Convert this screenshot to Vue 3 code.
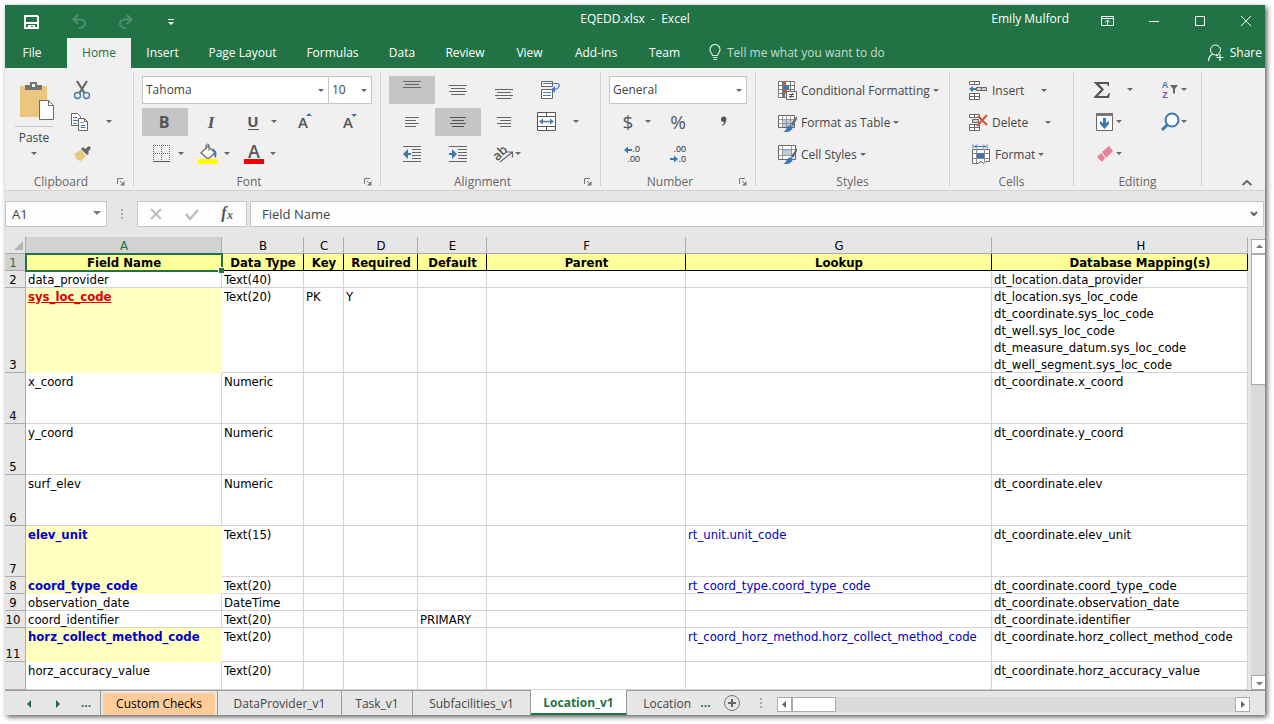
<script setup>
import { ref } from 'vue'

const ribbonTabs = ['File', 'Home', 'Insert', 'Page Layout', 'Formulas', 'Data', 'Review', 'View', 'Add-ins', 'Team']
const activeTab = ref('Home')

const fontName = ref('Tahoma')
const fontSize = ref('10')
const numberFormat = ref('General')
const cellRef = ref('A1')
const formula = ref('Field Name')

const columns = ['A', 'B', 'C', 'D', 'E', 'F', 'G', 'H']
const headings = ['Field Name', 'Data Type', 'Key', 'Required', 'Default', 'Parent', 'Lookup', 'Database Mapping(s)']

const rows = [
  { n: '2', size: 'one', name: 'data_provider', type: 'Text(40)', map: ['dt_location.data_provider'] },
  {
    n: '3', size: 'five', name: 'sys_loc_code', kind: 'key', type: 'Text(20)', key: 'PK', req: 'Y',
    map: ['dt_location.sys_loc_code', 'dt_coordinate.sys_loc_code', 'dt_well.sys_loc_code', 'dt_measure_datum.sys_loc_code', 'dt_well_segment.sys_loc_code'],
  },
  { n: '4', size: 'three', name: 'x_coord', type: 'Numeric', map: ['dt_coordinate.x_coord'] },
  { n: '5', size: 'three', name: 'y_coord', type: 'Numeric', map: ['dt_coordinate.y_coord'] },
  { n: '6', size: 'three', name: 'surf_elev', type: 'Numeric', map: ['dt_coordinate.elev'] },
  { n: '7', size: 'three', name: 'elev_unit', kind: 'lookup', type: 'Text(15)', lookup: 'rt_unit.unit_code', map: ['dt_coordinate.elev_unit'] },
  { n: '8', size: 'one', name: 'coord_type_code', kind: 'lookup', type: 'Text(20)', lookup: 'rt_coord_type.coord_type_code', map: ['dt_coordinate.coord_type_code'] },
  { n: '9', size: 'one', name: 'observation_date', type: 'DateTime', map: ['dt_coordinate.observation_date'] },
  { n: '10', size: 'one', name: 'coord_identifier', type: 'Text(20)', def: 'PRIMARY', map: ['dt_coordinate.identifier'] },
  { n: '11', size: 'two', name: 'horz_collect_method_code', kind: 'lookup', type: 'Text(20)', lookup: 'rt_coord_horz_method.horz_collect_method_code', map: ['dt_coordinate.horz_collect_method_code'] },
  { n: '', size: 'last', name: 'horz_accuracy_value', type: 'Text(20)', map: ['dt_coordinate.horz_accuracy_value'] },
]

const sheets = ['Custom Checks', 'DataProvider_v1', 'Task_v1', 'Subfacilities_v1', 'Location_v1', 'Location']
const sheetClass = ['custom', 'provider', 'task', 'sub', 'active', 'next']
</script>

<template>
  <div class="window">
    <header class="titlebar">
      <div class="quick">
        <button aria-label="Save">
          <svg width="46" height="30"><path d="M16 9h11l1 1v11H15V9z" fill="none" stroke="#fff" stroke-width="2" /><path d="M15 15h13v2H15zM18 21v-3h7v3h-2v-2h-2v2z" fill="#fff" /></svg>
        </button>
        <button aria-label="Undo">
          <svg width="46" height="30"><path d="M18 12.500h6c7 0 7 8-1 8.500M22 8l-4.500 4.500L22 17" fill="none" stroke="#4d9170" stroke-width="2" /></svg>
        </button>
        <button aria-label="Redo">
          <svg width="46" height="30"><path d="M29 12.500h-6c-7 0-7 8 1 8.500M25 8l4.500 4.500L25 17" fill="none" stroke="#4d9170" stroke-width="2" /></svg>
        </button>
        <button aria-label="Customize Quick Access Toolbar">
          <svg width="46" height="30"><path d="M20 12h6v1h-6zM20 15h6l-3 3z" fill="#fff" /></svg>
        </button>
      </div>
      <div class="doc">EQEDD.xlsx&nbsp; -&nbsp; Excel</div>
      <div class="sys">
        <span class="user">Emily Mulford</span>
        <button aria-label="Ribbon Display Options">
          <svg width="46" height="28"><path d="M16.500 8.500h12v9h-12zM16.500 10.500h12M22.500 17v-5M20 14.500l2.500-2.500 2.500 2.500" fill="none" stroke="#fff" /></svg>
        </button>
        <button aria-label="Minimize">
          <svg width="46" height="28"><path d="M18 13.500h10" stroke="#fff" /></svg>
        </button>
        <button aria-label="Maximize">
          <svg width="46" height="28"><path d="M18.500 8.500h9v9h-9z" fill="none" stroke="#fff" /></svg>
        </button>
        <button aria-label="Close">
          <svg width="42" height="28"><path d="M18 8l10 10M28 8l-10 10" stroke="#fff" /></svg>
        </button>
      </div>
    </header>

    <nav class="tabs">
      <div class="tablist">
        <button v-for="t in ribbonTabs" :key="t" :class="{ on: t === activeTab, file: t === 'File' }" @click="activeTab = t">{{ t }}</button>
      </div>
      <button class="tell">
        <svg width="12" height="18"><path d="M3.500 11.500C3 9 1 8.500 1 5.500a5 5 0 0 1 10 0c0 3-2 3.500-2.500 6zM4 13.500h4.500M4.500 15.500h3.500" fill="none" stroke="#d6e9de" stroke-width="1.200" /></svg>
        <span>Tell me what you want to do</span>
      </button>
      <button class="share">
        <svg width="18" height="18"><circle cx="8.500" cy="6" r="5" fill="none" stroke="#fff" /><path d="M1.500 17c0-4 2-6 4.500-7M9 11l2 1M9.500 13.500h7M13 10v7" fill="none" stroke="#fff" stroke-width="1.200" /></svg>
        <span>Share</span>
      </button>
    </nav>

    <section class="ribbon">
      <div class="group clipboard">
        <div class="body">
          <button class="paste">
            <svg width="40" height="51"><rect x="5" y="10" width="27" height="31" fill="#eac67f" /><path d="M10 14V9h5V6h7v3h5v5z" fill="#737373" /><rect x="17" y="8" width="3" height="3" fill="#f0f0f0" /><path d="M24.500 24.500h9l5 5v14h-14z" fill="#fff" stroke="#6a6a6a" /><path d="M33.500 24.500v5h5" fill="none" stroke="#6a6a6a" /><path d="M0 50.500h38" stroke="#c8c8c8" /></svg>
            <span>Paste</span>
            <svg width="38" height="14"><path d="M16 6h6l-3 3z" fill="#666" /></svg>
          </button>
          <div class="stack">
            <button aria-label="Cut"><svg width="60" height="28"><path d="M12 5l7.500 12M22 5l-7.500 12" stroke="#666" stroke-width="2.200" /><circle cx="12.500" cy="19.500" r="3" fill="none" stroke="#4a7ab0" stroke-width="1.400" /><circle cx="21.500" cy="19.500" r="3" fill="none" stroke="#4a7ab0" stroke-width="1.400" /></svg></button>
            <button aria-label="Copy"><svg width="60" height="28"><path d="M6.500 5.500h6l3 3v9h-9z" fill="#fff" stroke="#666" /><path d="M8 9.500h4M8 12.500h5M8 15.500h4" stroke="#4a7ab0" /><path d="M13.500 10.500h6l3 3v9h-9z" fill="#fff" stroke="#666" /><path d="M19.500 10.500v3h3" fill="none" stroke="#666" /><path d="M15.500 14.500h3M15.500 17.500h5M15.500 19.500h5" stroke="#4a7ab0" /><path d="M41 12h6l-3 3z" fill="#666" /></svg></button>
            <button aria-label="Format Painter"><svg width="60" height="28"><path d="M9 14l7-4 5 6-5 5-2-1-1 1z" fill="#eac67f" /><path d="M16 9l2-2 6 6-2 2zM20 9l4-3 2 2-3 4z" fill="#666" /></svg></button>
          </div>
        </div>
        <footer><span>Clipboard</span><button class="launch" aria-label="Clipboard options"><svg width="8" height="8"><path d="M.5 6V.5H6M3 3l3 3" fill="none" stroke="#777" /><path d="M7.500 3v4.500H3z" fill="#777" /></svg></button></footer>
      </div>

      <div class="group font">
        <div class="body keys five">
          <div class="combos">
            <label class="combo wide"><select v-model="fontName" aria-label="Font"><option>Tahoma</option></select><svg width="14" height="26"><path d="M4 12h6l-3 3z" fill="#666" /></svg></label>
            <label class="combo small"><select v-model="fontSize" aria-label="Font size"><option>10</option></select><svg width="14" height="26"><path d="M4 12h6l-3 3z" fill="#666" /></svg></label>
          </div>
          <button class="pressed" aria-label="Bold"><svg width="46" height="28"><text x="22" y="20" class="b">B</text></svg></button>
          <button aria-label="Italic"><svg width="46" height="28"><text x="23" y="20" class="i">I</text></svg></button>
          <button aria-label="Underline"><svg width="46" height="28"><text x="19" y="19" class="b u">U</text><path d="M14 21.500h11" stroke="#555" /><path d="M37 12h6l-3 3z" fill="#666" /></svg></button>
          <button aria-label="Increase Font Size"><svg width="46" height="28"><text x="23" y="20" class="a">A</text><path d="M26 8h6l-3-3z" fill="#3b77b5" /></svg></button>
          <button aria-label="Decrease Font Size"><svg width="46" height="28"><text x="22" y="20" class="a">A</text><path d="M25 6h6l-3 3z" fill="#3b77b5" /></svg></button>
          <button aria-label="Borders"><svg width="46" height="28"><path d="M11.500 5v16M19.500 5v16M27.500 5v16M11 5.500h17M11 13.500h17" stroke="#666" stroke-dasharray="1 1" /><path d="M11 21.500h17" stroke="#555" /><path d="M36 12h6l-3 3z" fill="#666" /></svg></button>
          <button aria-label="Fill Color"><svg width="46" height="28"><path d="M13 13l7-7 7 7-7 6z" fill="#fff" stroke="#666" stroke-width="1.200" /><path d="M18 9V5q2-2 3 0v6" fill="none" stroke="#666" /><path d="M24 8q6 2 4 10-3-2-2-6z" fill="#4a7ab0" /><path d="M10 19h20v5H10z" fill="#ff0" /><path d="M36 12h6l-3 3z" fill="#666" /></svg></button>
          <button aria-label="Font Color"><svg width="46" height="28"><text x="20" y="18" class="a big">A</text><path d="M10 19h20v5H10z" fill="#f00000" /><path d="M36 12h6l-3 3z" fill="#666" /></svg></button>
        </div>
        <footer><span>Font</span><button class="launch" aria-label="Font options"><svg width="8" height="8"><path d="M.5 6V.5H6M3 3l3 3" fill="none" stroke="#777" /><path d="M7.500 3v4.500H3z" fill="#777" /></svg></button></footer>
      </div>

      <div class="group alignment">
        <div class="body keys align">
          <button class="pressed" aria-label="Top Align"><svg width="46" height="28"><path d="M14 5.500h18M16 8.500h14M14 11.500h18" stroke="#666" /></svg></button>
          <button aria-label="Middle Align"><svg width="46" height="28"><path d="M14 9.500h18M16 12.500h14M14 15.500h18M16 18.500h14" stroke="#666" /></svg></button>
          <button aria-label="Bottom Align"><svg width="46" height="28"><path d="M14 13.500h18M16 16.500h14M14 19.500h18M16 22.500h14" stroke="#666" /></svg></button>
          <button aria-label="Wrap Text"><svg width="60" height="28"><path d="M14.500 5.500h11v5h-11zM14.500 13.500h11v9h-11z" fill="#fff" stroke="#666" /><path d="M16 7.500h14q3 0 2 3t-6 3M16 16.500h8M16 19.500h8" fill="none" stroke="#4a7ab0" stroke-width="1.200" /><path d="M28 10l-4 3.500 4 3.500z" fill="#4a7ab0" /></svg></button>
          <button aria-label="Align Left"><svg width="46" height="28"><path d="M16 9.500h14M16 12.500h11M16 15.500h14M16 18.500h11" stroke="#666" /></svg></button>
          <button class="pressed" aria-label="Center"><svg width="46" height="28"><path d="M15 9.500h16M17 12.500h12M15 15.500h16M17 18.500h12" stroke="#555" /></svg></button>
          <button aria-label="Align Right"><svg width="46" height="28"><path d="M16 9.500h14M19 12.500h11M16 15.500h14M19 18.500h11" stroke="#666" /></svg></button>
          <button aria-label="Merge and Center"><svg width="60" height="28"><path d="M10.500 4.500h18v18h-18zM10.500 8.500h18M10.500 18.500h18M19.500 4v4M19.500 19v4" fill="#fff" stroke="#555" /><path d="M14 13.500h11" stroke="#4a7ab0" stroke-width="1.500" /><path d="M12 13.500l4-3v6zM27 13.500l-4-3v6z" fill="#4a7ab0" /><path d="M46 12h6l-3 3z" fill="#666" /></svg></button>
          <button aria-label="Decrease Indent"><svg width="46" height="28"><path d="M14 6.500h18M23 9.500h9M23 12.500h9M23 15.500h9M23 18.500h9M14 21.500h18" stroke="#666" /><path d="M14 14l5-5v4h3v2h-3v4z" fill="#3b77b5" /></svg></button>
          <button aria-label="Increase Indent"><svg width="46" height="28"><path d="M14 6.500h18M23 9.500h9M23 12.500h9M23 15.500h9M23 18.500h9M14 21.500h18" stroke="#666" /><path d="M22 14l-5-5v4h-3v2h3v4z" fill="#3b77b5" /></svg></button>
          <button aria-label="Orientation"><svg width="46" height="28"><text x="0" y="0" class="ab" transform="translate(22 16) rotate(-45)">ab</text><path d="M19 22L31 12.500M26 12h5.500v5.500" fill="none" stroke="#666" stroke-width="1.200" /><path d="M34 12h6l-3 3z" fill="#666" /></svg></button>
        </div>
        <footer><span>Alignment</span><button class="launch" aria-label="Alignment options"><svg width="8" height="8"><path d="M.5 6V.5H6M3 3l3 3" fill="none" stroke="#777" /><path d="M7.500 3v4.500H3z" fill="#777" /></svg></button></footer>
      </div>

      <div class="group number">
        <div class="body keys three">
          <div class="combos">
            <label class="combo full"><select v-model="numberFormat" aria-label="Number format"><option>General</option></select><svg width="14" height="26"><path d="M4 12h6l-3 3z" fill="#666" /></svg></label>
          </div>
          <button aria-label="Accounting Format"><svg width="46" height="28"><text x="19" y="21" class="sym">$</text><path d="M36 12h6l-3 3z" fill="#666" /></svg></button>
          <button aria-label="Percent Style"><svg width="46" height="28"><text x="23" y="21" class="sym">%</text></svg></button>
          <button aria-label="Comma Style"><svg width="46" height="28"><path d="M20 12a2.800 2.800 0 1 1 5 1c-.5 3-2 4-4 5v-1c1.500-1 2-2 2-3-2 0-3-1-3-2z" fill="#555" /></svg></button>
          <button aria-label="Increase Decimal"><svg width="46" height="28"><text x="31" y="12" class="dec">.0</text><text x="31" y="22" class="dec">.00</text><path d="M15 10l4-3.500V9h4v2h-4v2.500z" fill="#3b77b5" /></svg></button>
          <button aria-label="Decrease Decimal"><svg width="46" height="28"><text x="31" y="12" class="dec">.00</text><text x="31" y="22" class="dec">.0</text><path d="M23 19l-4-3.500V18h-4v2h4v2.500z" fill="#3b77b5" /></svg></button>
        </div>
        <footer><span>Number</span><button class="launch" aria-label="Number options"><svg width="8" height="8"><path d="M.5 6V.5H6M3 3l3 3" fill="none" stroke="#777" /><path d="M7.500 3v4.500H3z" fill="#777" /></svg></button></footer>
      </div>

      <div class="group styles">
        <div class="body stack">
          <button class="cmd">
            <svg width="20" height="20"><path d="M.5 1.500h16v16H.500zM.500 5.500h16M.500 9.500h16M.500 13.500h16M4.500 1v16M12.500 1v16" fill="#fff" stroke="#777" /><path d="M5 2h3v3H5zM5 10h4v3H5z" fill="#d0573a" /><path d="M5 6h6v3H5zM5 14h2v3H5z" fill="#3b77b5" /><path d="M8.500 11.500h10v8h-10z" fill="#fff" stroke="#666" /><path d="M11 14.500h5M11 16.500h5M15 13l-3 5" stroke="#555" /></svg>
            <span>Conditional Formatting</span><i class="caret"></i>
          </button>
          <button class="cmd">
            <svg width="20" height="20"><path d="M.5 3.500h16v12H.5z" fill="#fff" stroke="#666" /><path d="M5 8h11v7H5z" fill="#b9cbe0" /><path d="M.5 7.500h16M.5 11.500h16M4.500 3v12M8.500 3v12M12.500 3v12" stroke="#888" stroke-width="0.800" /><path d="M19 4l-6 8 2 2 4-7z" fill="#666" /><path d="M5 20q3-1 4-5l3-2 3 2q-2 6-10 5z" fill="#3b77b5" /></svg>
            <span>Format as Table</span><i class="caret"></i>
          </button>
          <button class="cmd">
            <svg width="20" height="20"><path d="M.5 1.500h17v14H.5z" fill="#fff" stroke="#666" /><path d="M4 5h10v6H4z" fill="#b9cbe0" /><path d="M.5 5.500h17M.5 11.500h17M4.500 1v14M13.500 1v14" stroke="#888" stroke-width="0.800" /><path d="M19 4l-6 8 2 2 4-7z" fill="#666" /><path d="M5 20q3-1 4-5l3-2 3 2q-2 6-10 5z" fill="#3b77b5" /></svg>
            <span>Cell Styles</span><i class="caret"></i>
          </button>
        </div>
        <footer><span>Styles</span></footer>
      </div>

      <div class="group cells">
        <div class="body stack">
          <button class="cmd insert">
            <svg width="20" height="20"><path d="M.5 1.500h10v3H.5zM5.500 1v3M.5 13.500h10v6H.5zM.5 16.500h10M5.500 13v6" fill="#fff" stroke="#666" /><path d="M7.500 7.500h10v3h-10zM12.500 7v3" fill="#c9d5e3" stroke="#666" /><path d="M0 9l4-3v2h3v2H4v2z" fill="#3b77b5" /></svg>
            <span>Insert</span><i class="caret"></i>
          </button>
          <button class="cmd delete">
            <svg width="20" height="20"><path d="M.5 2.500h10v3H.5zM5.500 2v3M.5 12.500h10v6H.5zM.5 15.500h10M5.500 12v6" fill="#fff" stroke="#666" /><path d="M3.500 7.500h6v3h-6z" fill="#c9d5e3" stroke="#666" /><path d="M9 4l9 9M18 3L8 14" stroke="#cf5533" stroke-width="2" /></svg>
            <span>Delete</span><i class="caret"></i>
          </button>
          <button class="cmd format">
            <svg width="20" height="20"><path d="M1 .5v4M15 .5v4M2 2.500h12M5 .5l-2 2 2 2M11 .5l2 2-2 2" fill="none" stroke="#3b77b5" /><path d="M.5 5.500h17v12H14l-2 2-3-2-3 2H.5z" fill="#fff" stroke="#666" /><path d="M.5 9.500h17M.5 14.500h17M4.500 5v14M12.500 5v13" stroke="#888" /><path d="M5 9h7v5H5z" fill="#3b77b5" /></svg>
            <span>Format</span><i class="caret"></i>
          </button>
        </div>
        <footer><span>Cells</span></footer>
      </div>

      <div class="group editing">
        <div class="body keys edit">
          <button aria-label="AutoSum"><svg width="64" height="28"><path d="M12 6h15v4h-1l-1-2h-8l5 5.500-6 6.500h9l2-3h1l-1 5H12v-1l7-7.500-7-7z" fill="#555" /><path d="M45 12h6l-3 3z" fill="#666" /></svg></button>
          <button aria-label="Sort and Filter"><svg width="56" height="28"><text x="19" y="12" class="az blue">A</text><text x="19" y="22" class="az purple">Z</text><path d="M24 9h8l-3 4v5l-2-1v-4z" fill="#666" /><path d="M35 12h6l-3 3z" fill="#666" /></svg></button>
          <button aria-label="Fill"><svg width="64" height="28"><path d="M14.500 6.500h16v16h-16z" fill="#fff" stroke="#666" /><path d="M14 5h17v3H14z" fill="#777" /><path d="M21 10h3v5l3-2v3l-4.500 5-4.500-5v-3l3 2z" fill="#3b77b5" /><path d="M34 12h6l-3 3z" fill="#666" /></svg></button>
          <button aria-label="Find and Select"><svg width="56" height="28"><circle cx="26" cy="12" r="6.500" fill="#fff" stroke="#3b77b5" stroke-width="2" /><path d="M21.500 16.500L16 22" stroke="#3b77b5" stroke-width="3" /><path d="M35 12h6l-3 3z" fill="#666" /></svg></button>
          <button aria-label="Clear"><svg width="64" height="28"><path d="M20 12l7-6 4 5-7 7z" fill="#e58297" /><path d="M19 13l4 5-3 4-5-5z" fill="#e58297" /><path d="M34 12h6l-3 3z" fill="#666" /></svg></button>
        </div>
        <footer><span>Editing</span></footer>
      </div>
      <button class="collapse" aria-label="Collapse the Ribbon"><svg width="12" height="8"><path d="M1.500 6L6 2l4.500 4" fill="none" stroke="#666" stroke-width="2" /></svg></button>
    </section>

    <section class="formula">
      <label class="namebox"><select v-model="cellRef" aria-label="Name Box"><option>A1</option></select><svg width="18" height="24"><path d="M5 9h8l-4 4z" fill="#777" /></svg></label>
      <svg class="grip" width="4" height="14"><path d="M1 2h2v2H1zM1 6h2v2H1zM1 10h2v2H1z" fill="#aaa" /></svg>
      <div class="fxbox">
        <button aria-label="Cancel"><svg width="36" height="24"><path d="M13 7l10 10M23 7L13 17" stroke="#bdbdbd" stroke-width="2" /></svg></button>
        <button aria-label="Enter"><svg width="36" height="24"><path d="M12 12l4 5 8-9" fill="none" stroke="#bdbdbd" stroke-width="2.400" /></svg></button>
        <button aria-label="Insert Function"><svg width="36" height="24"><text x="14" y="16" class="fx">f</text><text x="20" y="17" class="fx sub">x</text></svg></button>
      </div>
      <div class="formulabox">
        <input v-model="formula" aria-label="Formula Bar" />
        <button aria-label="Expand Formula Bar"><svg width="18" height="24"><path d="M6 10l3 3 3-3" fill="none" stroke="#666" stroke-width="2" /></svg></button>
      </div>
    </section>

    <main class="sheet">
      <table>
        <colgroup>
          <col class="c0" /><col v-for="c in columns" :key="c" :class="'c' + c" />
        </colgroup>
        <thead>
          <tr>
            <th class="corner"><svg width="10" height="10"><path d="M10 0v9H1z" fill="#b5b5b5" /></svg></th>
            <th v-for="c in columns" :key="c" scope="col" class="colhead" :class="{ sel: c === 'A' }">{{ c }}</th>
          </tr>
        </thead>
        <tbody>
          <tr class="one titles">
            <th scope="row" class="rowhead sel">1</th>
            <td v-for="(h, i) in headings" :key="h" :class="{ cursor: i === 0 }">{{ h }}</td>
          </tr>
          <tr v-for="r in rows" :key="r.name" :class="r.size">
            <th scope="row" class="rowhead">{{ r.n }}</th>
            <td :class="r.kind">{{ r.name }}</td>
            <td>{{ r.type }}</td>
            <td>{{ r.key }}</td>
            <td>{{ r.req }}</td>
            <td>{{ r.def }}</td>
            <td></td>
            <td class="ref">{{ r.lookup }}</td>
            <td><div v-for="m in r.map" :key="m">{{ m }}</div></td>
          </tr>
        </tbody>
      </table>
      <div class="vscroll">
        <button aria-label="Scroll up"><svg width="14" height="14"><path d="M4 8h7L7.500 4.500z" fill="#777" /></svg></button>
        <div class="thumb"></div>
        <button class="down" aria-label="Scroll down"><svg width="14" height="14"><path d="M4 6h7l-3.500 3.500z" fill="#777" /></svg></button>
      </div>
    </main>

    <footer class="bottom">
      <div class="navs">
        <button aria-label="Previous sheet"><svg width="28" height="24"><path d="M12 13l4-4v8z" fill="#1f6b41" /></svg></button>
        <button aria-label="Next sheet"><svg width="28" height="24"><path d="M17 13l-4-4v8z" fill="#1f6b41" /></svg></button>
        <button class="more">...</button>
      </div>
      <button v-for="(s, i) in sheets" :key="s" class="tab" :class="sheetClass[i]"><span>{{ s }}</span></button>
      <button class="more tail">...</button>
      <button class="add" aria-label="New sheet"><svg width="18" height="18"><circle cx="9" cy="9" r="7.500" fill="none" stroke="#777" /><path d="M9 5v8M5 9h8" stroke="#666" stroke-width="2" /></svg></button>
      <svg class="grip" width="4" height="14"><path d="M1 2h2v2H1zM1 6h2v2H1zM1 10h2v2H1z" fill="#aaa" /></svg>
      <div class="hscroll">
        <button aria-label="Scroll left"><svg width="13" height="13"><path d="M8 3v7L4 6.500z" fill="#666" /></svg></button>
        <div class="hthumb"></div>
        <button class="right" aria-label="Scroll right"><svg width="13" height="13"><path d="M5 3v7l4-3.500z" fill="#666" /></svg></button>
      </div>
    </footer>
  </div>
</template>

<style>
body {
  background: #fff;
}
</style>

<style scoped>
* {
  box-sizing: border-box;
}
.window {
  margin: 5px 9px 9px 5px;
  background: #e6e6e6;
  box-shadow: 2px 2px 5px rgba(0, 0, 0, 0.65);
  font: 12px/16px "Open Sans", "Noto Sans", sans-serif;
  color: #444;
}
button {
  font: inherit;
  color: inherit;
  background: none;
  border: 0;
  padding: 0;
  margin: 0;
}
svg {
  display: block;
  flex: none;
}
select,
input {
  font: inherit;
  color: inherit;
  background: none;
  border: 0;
  padding: 0;
  margin: 0;
  outline: 0;
  appearance: none;
  min-width: 0;
  flex: 1;
}

/* title bar */
.titlebar {
  display: grid;
  grid-template-columns: 1fr auto 1fr;
  height: 33px;
  background: #217346;
  color: #fff;
}
.quick {
  display: flex;
  padding-left: 5px;
}
.doc {
  padding-top: 6px;
}
.sys {
  display: flex;
  justify-content: flex-end;
}
.user {
  padding: 6px 16px 0 0;
}

/* ribbon tabs */
.tabs {
  display: flex;
  height: 30px;
  background: #217346;
  color: #fff;
}
.tablist {
  display: grid;
  grid-template-columns: 62px 64px 63px 97px 83px 56px 70px 59px 74px 63px;
}
.tablist .on {
  background: #f0f0f0;
  color: #217346;
}
.tablist .file {
  padding-right: 8px;
}
.tell,
.share {
  display: flex;
  align-items: center;
  gap: 6px;
}
.tell {
  margin-left: 13px;
  color: #c3dccf;
}
.share {
  margin-left: auto;
  padding-right: 3px;
  gap: 5px;
}

/* ribbon */
.ribbon {
  display: flex;
  height: 123px;
  background: #f0f0f0;
  border-bottom: 1px solid #d2d2d2;
}
.group {
  display: flex;
  flex-direction: column;
  margin: 4px 0;
  border-right: 1px solid #d0d0d0;
}
.body {
  flex: 1;
  padding: 4px 8px 0;
}
.group footer {
  display: flex;
  height: 8px;
  align-items: center;
  color: #666;
}
.group footer span {
  flex: 1;
  text-align: center;
}
.launch {
  margin-right: 8px;
}
.clipboard {
  width: 129px;
}
.clipboard .body {
  display: flex;
  padding-left: 10px;
  gap: 10px;
}
.font {
  width: 247px;
}
.alignment {
  width: 220px;
}
.number {
  width: 155px;
}
.styles {
  width: 194px;
}
.cells {
  width: 124px;
}
.editing {
  width: 128px;
}
.paste {
  display: flex;
  flex-direction: column;
  width: 40px;
}
.paste span {
  padding: 3px 2px 0 0;
  align-self: stretch;
}
.stack {
  display: flex;
  flex-direction: column;
  gap: 4px;
}
.keys {
  display: grid;
  grid-auto-rows: 28px;
  align-content: start;
  row-gap: 4px;
}
.five {
  grid-template-columns: repeat(5, 46px);
}
.align {
  grid-template-columns: repeat(3, 46px) 60px;
}
.three {
  grid-template-columns: repeat(3, 46px);
}
.edit {
  grid-template-columns: 64px 56px;
}
.pressed {
  background: #c5c5c5;
}
.combos {
  grid-column: 1 / -1;
  display: flex;
}
.combo {
  display: flex;
  background: #fff;
  border: 1px solid #c6c6c6;
  padding-left: 3px;
}
.wide {
  flex: 1;
}
.small {
  width: 44px;
  margin-left: -1px;
}
.full {
  flex: 1;
}
text {
  fill: #555;
  text-anchor: middle;
  font-family: "Open Sans", "Noto Sans", sans-serif;
}
.b {
  font-size: 16px;
  font-weight: 700;
}
.u {
  font-size: 15px;
}
.i {
  font: italic 700 17px "Liberation Serif", serif;
}
.a {
  font-size: 15px;
  font-weight: 600;
}
.big {
  font-size: 18px;
}
.ab {
  font-size: 13px;
  font-weight: 600;
}
.sym {
  font-size: 19px;
}
.dec {
  font: 9px "Liberation Sans", sans-serif;
  text-anchor: end;
  fill: #333;
}
.az {
  font: 700 9px "Liberation Sans", sans-serif;
}
.blue {
  fill: #3b77b5;
}
.purple {
  fill: #8a4fae;
}
.cmd {
  display: flex;
  align-items: center;
  height: 28px;
  gap: 3px;
}
.cmd span {
  padding-top: 2px;
}
.caret {
  width: 0;
  border: 3px solid transparent;
  border-top-color: #666;
  border-bottom: 0;
}
.styles .stack {
  padding-left: 22px;
}
.cells .stack {
  padding-left: 19px;
}
.insert .caret,
.delete .caret {
  margin-left: 14px;
}
.format {
  padding-left: 3px;
}
.collapse {
  margin: auto 12px 3px auto;
}

/* formula bar */
.formula {
  display: flex;
  align-items: center;
  height: 46px;
  padding: 0 1px 0 0;
  font-size: 13px;
}
.namebox,
.fxbox,
.formulabox {
  display: flex;
  height: 26px;
  background: #fdfdfd;
  border: 1px solid #c6c6c6;
}
.namebox {
  width: 102px;
  padding-left: 6px;
}
.formula .grip {
  margin: 0 13px;
}
.fxbox {
  width: 110px;
}
.formulabox {
  flex: 1;
  margin-left: 3px;
  padding-left: 11px;
}
.fx {
  font: italic 700 16px "Liberation Serif", serif;
}
.fx.sub {
  font-size: 12px;
}

/* grid */
.sheet {
  display: flex;
}
table {
  flex: 1;
  width: 0;
  table-layout: fixed;
  border-collapse: separate;
  border-spacing: 0;
  background: #fff;
  color: #000;
  font: 13px/17px "DejaVu Sans Condensed", "Noto Sans", sans-serif;
}
.c0 {
  width: 21px;
}
.cA {
  width: 196px;
}
.cB {
  width: 82px;
}
.cC {
  width: 40px;
}
.cD {
  width: 74px;
}
.cE {
  width: 69px;
}
.cF {
  width: 199px;
}
.cG {
  width: 306px;
}
th,
td {
  padding: 0;
  font-weight: 400;
  white-space: nowrap;
  overflow: hidden;
}
td {
  padding: 0 2px;
  vertical-align: top;
  box-shadow: inset -1px -1px #d4d4d4;
}
thead tr,
.one {
  height: 17px;
}
.two {
  height: 34px;
}
.sheet .three {
  height: 51px;
}
tr.five {
  height: 85px;
}
.last {
  height: 28px;
}
.corner,
.colhead {
  background: #e6e6e6;
  box-shadow: inset -1px -1px #ababab;
}
.corner svg {
  margin-left: 8px;
}
.rowhead {
  background: #e6e6e6;
  box-shadow: inset -1px -1px #ababab;
  vertical-align: bottom;
  text-align: center;
  padding-right: 5px;
}
.sel {
  background: #d2d2d2;
  color: #217346;
}
.titles td {
  background: #ff9;
  box-shadow: inset -1px -1px #000;
  font-weight: 700;
  text-align: center;
}
.colhead:last-child,
.titles td:last-child {
  padding-left: 42px;
}
.titles td.cursor {
  position: relative;
  overflow: visible;
  outline: 2px solid #217346;
  outline-offset: -1px;
  box-shadow: none;
}
.cursor::after {
  content: "";
  position: absolute;
  right: -2px;
  bottom: -2px;
  width: 5px;
  height: 5px;
  background: #217346;
  box-shadow: -1px -1px #fff;
}
td.key,
td.lookup {
  background: #ffffc0;
  box-shadow: none;
  font-weight: 700;
  color: #00c;
}
td.key {
  color: #e00000;
  text-decoration: underline;
}
.ref {
  color: #00b;
}
.vscroll {
  display: flex;
  flex-direction: column;
  width: 14px;
  margin: 2px 0 0 3px;
  background: #dadada;
}
.vscroll button,
.vscroll .thumb {
  background: #fff;
  border: 1px solid #ababab;
  border-right: 0;
}
.vscroll button {
  height: 15px;
}
.thumb {
  height: 131px;
}
.vscroll .down {
  margin-top: auto;
}

/* sheet tabs */
.bottom {
  display: flex;
  height: 25px;
  border-top: 1px solid #999;
}
.navs {
  display: flex;
  padding-left: 10px;
}
.more {
  width: 30px;
  color: #217346;
  font-weight: 700;
}
.tab {
  border-right: 1px solid #999;
  height: 24px;
  padding-top: 2px;
}
.tab span {
  display: block;
  line-height: 22px;
}
.custom {
  width: 118px;
  border-left: 1px solid #999;
  padding: 2px 2px 0;
  color: #000;
  margin-left: -1px;
}
.custom span {
  background: #ffcb99;
}
.provider {
  width: 124px;
}
.task {
  width: 71px;
}
.sub {
  width: 118px;
}
.active {
  width: 96px;
  margin-top: -1px;
  height: 25px;
  background: #fff;
  color: #217346;
  font-weight: 700;
  border-bottom: 2px solid #217346;
}
.next {
  width: 64px;
  border: 0;
  text-align: right;
}
.tail {
  width: 29px;
}
.add {
  margin-left: 3px;
}
.bottom .grip {
  margin: 5px 14px 0 18px;
}
.hscroll {
  display: flex;
  flex: 1;
  height: 15px;
  margin: 6px 15px 0 0;
  background: #dadada;
}
.hscroll button {
  width: 15px;
  border: 1px solid #ababab;
  background: #fff;
}
.hthumb {
  width: 44px;
  border: 1px solid #ababab;
  background: #fff;
}
.hscroll .right {
  margin-left: auto;
}
</style>
